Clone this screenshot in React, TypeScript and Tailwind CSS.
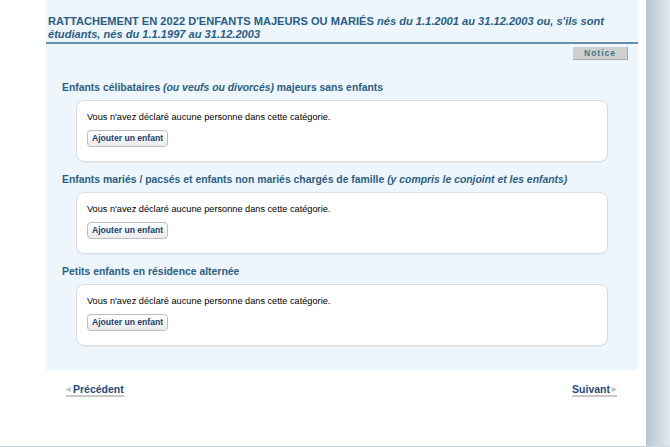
import React from 'react';

const sections = [
  {
    title: (
      <>
        Enfants célibataires <i>(ou veufs ou divorcés)</i> majeurs sans enfants
      </>
    ),
  },
  {
    title: (
      <>
        Enfants mariés / pacsés et enfants non mariés chargés de famille{' '}
        <i>(y compris le conjoint et les enfants)</i>
      </>
    ),
  },
  {
    title: <>Petits enfants en résidence alternée</>,
  },
];

function Section({ title }: { title: React.ReactNode }) {
  return (
    <div className="flex flex-col">
      <div className="pl-[16px] text-[10.4px] leading-[12px] font-bold text-[#2d5f82] whitespace-nowrap">
        {title}
      </div>
      <div className="mt-[6px] mx-[30px] h-[62px] rounded-[8px] border border-[#d8dcdf] bg-white pl-[10px] pt-[11px] shadow-[0_1px_1px_rgba(0,0,0,0.04)]">
        <div className="text-[9.2px] leading-[11px] text-black">
          Vous n'avez déclaré aucune personne dans cette catégorie.
        </div>
        <button className="mt-[7px] h-[17px] w-[81px] rounded-[4px] border border-[#b9bec3] bg-linear-to-b from-white to-[#ececec] text-[8.6px] font-bold text-[#183f6b] leading-none">
          Ajouter un enfant
        </button>
      </div>
    </div>
  );
}

export default function App() {
  return (
    <div
      className="flex h-[447px] w-[670px] overflow-hidden bg-white"
      style={{ fontFamily: '"Liberation Sans", Arial, sans-serif' }}
    >
      <div className="flex w-[646px] flex-col border-b border-[#c3d1db]">
        <div className="ml-[46px] w-[592px] bg-[#edf5fd] pt-[15px] pb-[24px]">
          <div className="border-b-2 border-[#6590ad] pl-[2px] pb-[1px] text-[11.1px] leading-[13px] font-bold text-[#2a5d85] whitespace-nowrap">
            RATTACHEMENT EN 2022 D'ENFANTS MAJEURS OU MARIÉS{' '}
            <i>nés du 1.1.2001 au 31.12.2003 ou, s'ils sont</i>
            <br />
            <i>étudiants, nés du 1.1.1997 au 31.12.2003</i>
          </div>
          <div className="flex justify-end pr-[10px] pt-[3px]">
            <div className="flex h-[13px] w-[55px] items-center justify-center border-r border-b border-[#a9a9a9] bg-[#cfcfcf] text-[8.5px] font-bold tracking-[1px] text-[#3e7c86]">
              Notice
            </div>
          </div>
          <div className="mt-[22px] flex flex-col gap-[12px]">
            {sections.map((s, i) => (
              <Section key={i} title={s.title} />
            ))}
          </div>
        </div>
        <div className="ml-[66px] mr-[29px] mt-[13px] flex justify-between text-[10.5px] leading-[12px] font-bold text-[#1f4a7a]">
          <div className="flex items-center gap-[2px] border-b-2 border-[#c9c9c9]">
            <span className="text-[6px] text-[#c0c0c0]">◀</span>
            <span>Précédent</span>
          </div>
          <div className="flex items-center gap-[2px] border-b-2 border-[#c9c9c9]">
            <span>Suivant</span>
            <span className="text-[6px] text-[#c0c0c0]">▶</span>
          </div>
        </div>
      </div>
      <div className="w-[24px] border-b border-[#d3dce2] bg-linear-to-r from-[#b8c6d0] to-[#e2e8ec]" />
    </div>
  );
}
